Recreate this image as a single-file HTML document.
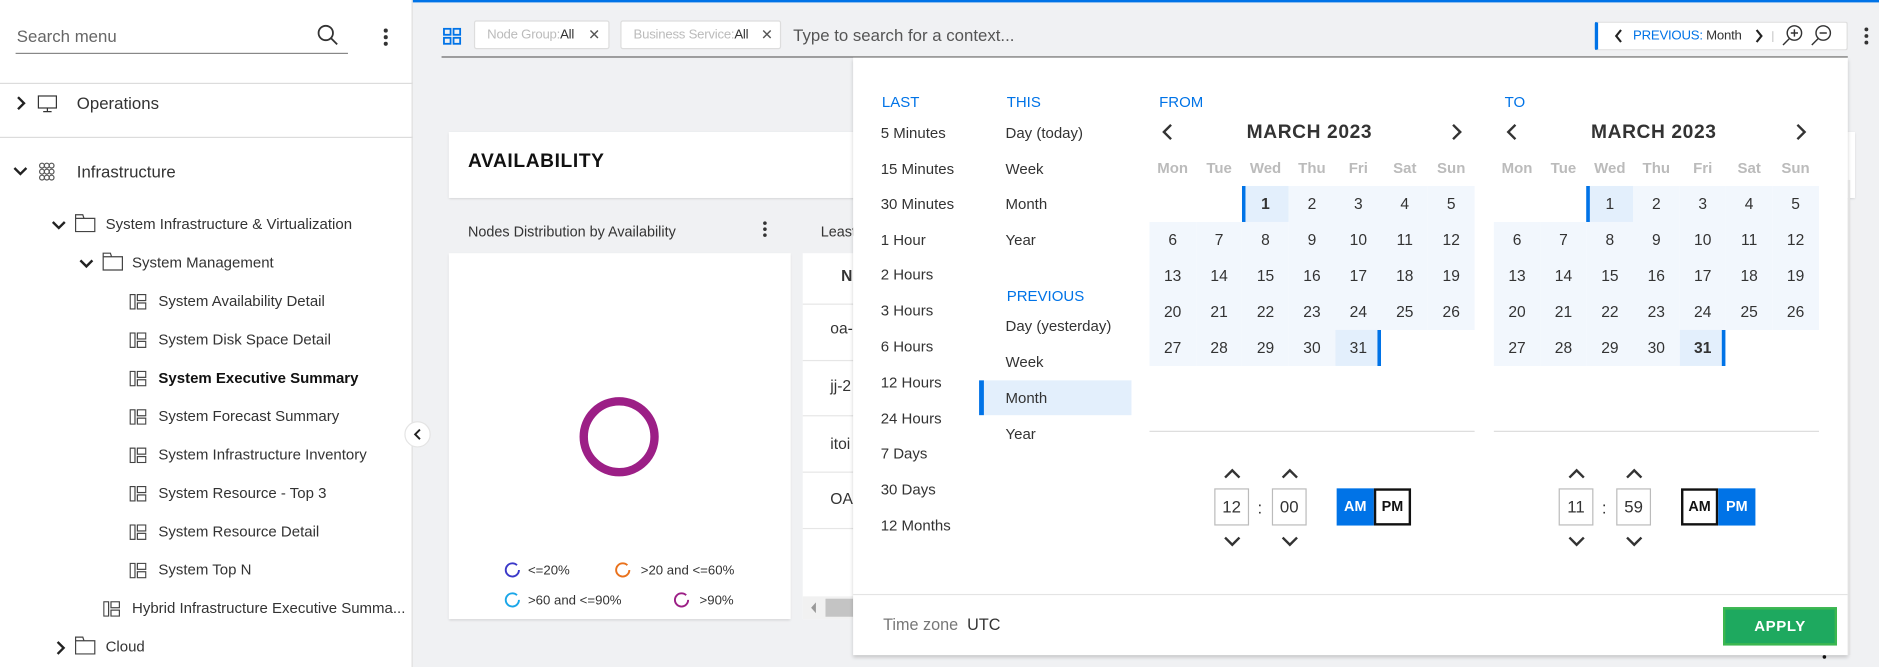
<!DOCTYPE html>
<html><head><meta charset="utf-8">
<style>
*{box-sizing:border-box;margin:0;padding:0}
html,body{width:1879px;height:667px;overflow:hidden;background:#f0f1f3;font-family:"Liberation Sans",sans-serif;color:#333}
#w{position:absolute;left:0;top:0;width:1566px;height:556px;transform:scale(1.19987);transform-origin:0 0;background:#f0f1f3}
.a{position:absolute}
.t{position:absolute;font-size:12.5px;color:#333;white-space:nowrap;line-height:16px}
.side{left:0;top:0;width:344px;height:556px;background:#fff;border-right:1px solid #ddd}
.hr{position:absolute;height:1px;background:#dcdcdc}
.chip{position:absolute;top:17px;height:24px;background:#fff;border:1px solid #ddd;border-radius:2px;font-size:11px;line-height:22px;padding-left:10px;color:#bbb;white-space:nowrap;letter-spacing:-.2px}
.chip b{font-weight:normal;color:#333}
.list .t{font-size:12.5px}
.cal{position:absolute;display:grid;grid-template-columns:repeat(7,38.7px);grid-auto-rows:30px;font-size:13px;color:#333}
.cal div{text-align:center;line-height:30px}
.cal .h{color:#bbb;font-weight:bold;font-size:12.5px}
.cal .r{background:#f2f7fd}
.cal .s{background:#e3effc;box-shadow:inset 3px 0 0 #0073e7}
.cal .e{background:#e3effc;box-shadow:inset -3px 0 0 #0073e7}
.mh{position:absolute;font-weight:bold;font-size:16px;color:#333;letter-spacing:.5px}
.box{position:absolute;width:29px;height:31px;border:1px solid #bbb;font-size:14px;text-align:center;line-height:29px;background:#fff}
.ap{position:absolute;top:407px;height:31px;width:31px;font-size:12px;font-weight:bold;text-align:center;line-height:31px}
.blue{color:#0073e7}
</style></head><body>
<div id="w">
<div class="a" style="left:0;top:0;width:1566px;height:2px;background:#0073e7"></div>
<div class="a" style="left:0;top:0;width:183px;height:2px;background:#1a9be8"></div>

<!-- sidebar -->
<div class="a side">
  <div class="t" style="left:14px;top:22px;font-size:14px;color:#666">Search menu</div>
  <svg class="a" style="left:264px;top:20px" width="18" height="18" viewBox="0 0 18 18"><circle cx="7.5" cy="7.5" r="6" fill="none" stroke="#333" stroke-width="1.5"/><path d="M12 12l5 5" stroke="#333" stroke-width="1.5"/></svg>
  <div class="a" style="left:13px;top:44px;width:277px;height:1px;background:#888"></div>
  <svg class="a" style="left:319px;top:23px" width="5" height="16"><circle cx="2.5" cy="2.5" r="1.7" fill="#333"/><circle cx="2.5" cy="8" r="1.7" fill="#333"/><circle cx="2.5" cy="13.5" r="1.7" fill="#333"/></svg>
  <div class="hr" style="left:0;top:69px;width:344px"></div>
  <svg class="a" style="left:13px;top:80px" width="10" height="12"><path d="M2 1l5 5-5 5" fill="none" stroke="#222" stroke-width="2"/></svg>
  <svg class="a" style="left:31px;top:79px" width="18" height="15"><rect x="1" y="1" width="15" height="10" fill="none" stroke="#333"/><path d="M8.5 11v3M5 14h7" stroke="#333"/></svg>
  <div class="t" style="left:64px;top:78px;font-size:14px">Operations</div>
  <div class="hr" style="left:0;top:114px;width:344px"></div>
  <svg class="a" style="left:11px;top:138px" width="12" height="10"><path d="M1 2l5 5 5-5" fill="none" stroke="#222" stroke-width="2"/></svg>
  <svg class="a" style="left:31px;top:135px" width="16" height="16" fill="none" stroke="#555" stroke-width="1"><circle cx="4" cy="3" r="2"/><circle cx="8" cy="3" r="2"/><circle cx="12" cy="3" r="2"/><circle cx="4" cy="8" r="2"/><circle cx="12" cy="8" r="2"/><circle cx="4" cy="13" r="2"/><circle cx="8" cy="13" r="2"/><circle cx="12" cy="13" r="2"/><circle cx="8" cy="8" r="2"/></svg>
  <div class="t" style="left:64px;top:135px;font-size:14px">Infrastructure</div>

  <svg class="a" style="left:43px;top:183px" width="12" height="10"><path d="M1 2l5 5 5-5" fill="none" stroke="#222" stroke-width="2"/></svg>
  <svg class="a" style="left:62px;top:178px" width="18" height="16"><path d="M1 1h6l1 3h9v11H1z M1 4h7" fill="none" stroke="#444"/></svg>
  <div class="t" style="left:88px;top:179px">System Infrastructure &amp; Virtualization</div>

  <svg class="a" style="left:66px;top:215px" width="12" height="10"><path d="M1 2l5 5 5-5" fill="none" stroke="#222" stroke-width="2"/></svg>
  <svg class="a" style="left:85px;top:210px" width="18" height="16"><path d="M1 1h6l1 3h9v11H1z M1 4h7" fill="none" stroke="#444"/></svg>
  <div class="t" style="left:110px;top:211px">System Management</div>

  <svg class="a" style="left:108px;top:245px" width="14" height="13"><rect x="0.5" y="0.5" width="4" height="12" fill="none" stroke="#444"/><rect x="6.5" y="0.5" width="7" height="5" fill="none" stroke="#444"/><rect x="6.5" y="7.5" width="7" height="5" fill="none" stroke="#444"/></svg>
  <div class="t" style="left:132px;top:243px">System Availability Detail</div>
  <svg class="a" style="left:108px;top:277px" width="14" height="13"><rect x="0.5" y="0.5" width="4" height="12" fill="none" stroke="#444"/><rect x="6.5" y="0.5" width="7" height="5" fill="none" stroke="#444"/><rect x="6.5" y="7.5" width="7" height="5" fill="none" stroke="#444"/></svg>
  <div class="t" style="left:132px;top:275px">System Disk Space Detail</div>
  <svg class="a" style="left:108px;top:309px" width="14" height="13"><rect x="0.5" y="0.5" width="4" height="12" fill="none" stroke="#444"/><rect x="6.5" y="0.5" width="7" height="5" fill="none" stroke="#444"/><rect x="6.5" y="7.5" width="7" height="5" fill="none" stroke="#444"/></svg>
  <div class="t" style="left:132px;top:307px;font-weight:bold;color:#111">System Executive Summary</div>
  <svg class="a" style="left:108px;top:341px" width="14" height="13"><rect x="0.5" y="0.5" width="4" height="12" fill="none" stroke="#444"/><rect x="6.5" y="0.5" width="7" height="5" fill="none" stroke="#444"/><rect x="6.5" y="7.5" width="7" height="5" fill="none" stroke="#444"/></svg>
  <div class="t" style="left:132px;top:339px">System Forecast Summary</div>
  <svg class="a" style="left:108px;top:373px" width="14" height="13"><rect x="0.5" y="0.5" width="4" height="12" fill="none" stroke="#444"/><rect x="6.5" y="0.5" width="7" height="5" fill="none" stroke="#444"/><rect x="6.5" y="7.5" width="7" height="5" fill="none" stroke="#444"/></svg>
  <div class="t" style="left:132px;top:371px">System Infrastructure Inventory</div>
  <svg class="a" style="left:108px;top:405px" width="14" height="13"><rect x="0.5" y="0.5" width="4" height="12" fill="none" stroke="#444"/><rect x="6.5" y="0.5" width="7" height="5" fill="none" stroke="#444"/><rect x="6.5" y="7.5" width="7" height="5" fill="none" stroke="#444"/></svg>
  <div class="t" style="left:132px;top:403px">System Resource - Top 3</div>
  <svg class="a" style="left:108px;top:437px" width="14" height="13"><rect x="0.5" y="0.5" width="4" height="12" fill="none" stroke="#444"/><rect x="6.5" y="0.5" width="7" height="5" fill="none" stroke="#444"/><rect x="6.5" y="7.5" width="7" height="5" fill="none" stroke="#444"/></svg>
  <div class="t" style="left:132px;top:435px">System Resource Detail</div>
  <svg class="a" style="left:108px;top:469px" width="14" height="13"><rect x="0.5" y="0.5" width="4" height="12" fill="none" stroke="#444"/><rect x="6.5" y="0.5" width="7" height="5" fill="none" stroke="#444"/><rect x="6.5" y="7.5" width="7" height="5" fill="none" stroke="#444"/></svg>
  <div class="t" style="left:132px;top:467px">System Top N</div>
  <svg class="a" style="left:86px;top:501px" width="14" height="13"><rect x="0.5" y="0.5" width="4" height="12" fill="none" stroke="#444"/><rect x="6.5" y="0.5" width="7" height="5" fill="none" stroke="#444"/><rect x="6.5" y="7.5" width="7" height="5" fill="none" stroke="#444"/></svg>
  <div class="t" style="left:110px;top:499px">Hybrid Infrastructure Executive Summa...</div>
  <svg class="a" style="left:46px;top:534px" width="10" height="12"><path d="M2 1l5 5-5 5" fill="none" stroke="#222" stroke-width="2"/></svg>
  <svg class="a" style="left:62px;top:530px" width="18" height="16"><path d="M1 1h6l1 3h9v11H1z M1 4h7" fill="none" stroke="#444"/></svg>
  <div class="t" style="left:88px;top:531px">Cloud</div>
</div>
<div class="a" style="left:337px;top:351px;width:22px;height:22px;border-radius:50%;background:#fff;border:1px solid #e4e4e4"></div>
<svg class="a" style="left:343px;top:357px" width="10" height="10"><path d="M7 1L3 5l4 4" fill="none" stroke="#222" stroke-width="1.6"/></svg>

<!-- toolbar -->
<svg class="a" style="left:369px;top:23px" width="16" height="15" fill="none" stroke="#0073e7" stroke-width="1.5"><rect x="1" y="1" width="5.5" height="5"/><rect x="9" y="1" width="5.5" height="5"/><rect x="1" y="8.5" width="5.5" height="5"/><rect x="9" y="8.5" width="5.5" height="5"/></svg>
<div class="chip" style="left:395px;width:113px">Node Group:<b>All</b><span style="position:absolute;right:7px;color:#555;font-size:12px">✕</span></div>
<div class="chip" style="left:517px;width:134px">Business Service:<b>All</b><span style="position:absolute;right:6px;color:#555;font-size:12px">✕</span></div>
<div class="t" style="left:661px;top:21px;font-size:14px;color:#555">Type to search for a context...</div>
<div class="a" style="left:368px;top:47px;width:1172px;height:1px;background:#666"></div>
<div class="a" style="left:1329px;top:18px;width:211px;height:24px;background:#fff;border:1px solid #ddd;border-left:3px solid #0073e7;border-radius:2px"></div>
<svg class="a" style="left:1345px;top:24px" width="8" height="12"><path d="M6 1L2 6l4 5" fill="none" stroke="#222" stroke-width="1.8"/></svg>
<div class="t" style="left:1361px;top:22px;font-size:11px;letter-spacing:-.2px"><span class="blue">PREVIOUS:</span> Month</div>
<svg class="a" style="left:1462px;top:24px" width="8" height="12"><path d="M2 1l4 5-4 5" fill="none" stroke="#222" stroke-width="1.8"/></svg>
<div class="a" style="left:1477px;top:26px;width:1px;height:9px;background:#ccc"></div>
<svg class="a" style="left:1485px;top:20px" width="18" height="18" fill="none" stroke="#333" stroke-width="1.2"><circle cx="10.5" cy="7.5" r="6"/><path d="M6.5 12L1 17.5M10.5 4.5v6M7.5 7.5h6"/></svg>
<svg class="a" style="left:1509px;top:20px" width="18" height="18" fill="none" stroke="#333" stroke-width="1.2"><circle cx="10.5" cy="7.5" r="6"/><path d="M6.5 12L1 17.5M7.5 7.5h6"/></svg>
<svg class="a" style="left:1553px;top:22px" width="5" height="16"><circle cx="2.5" cy="2.5" r="1.6" fill="#333"/><circle cx="2.5" cy="8" r="1.6" fill="#333"/><circle cx="2.5" cy="13.5" r="1.6" fill="#333"/></svg>

<!-- availability card -->
<div class="a" style="left:374px;top:110px;width:1172px;height:55px;background:#fff;box-shadow:0 1px 2px rgba(0,0,0,.15)"></div>
<div class="t" style="left:390px;top:127px;font-size:16px;font-weight:bold;color:#111;letter-spacing:.5px">AVAILABILITY</div>
<div class="t" style="left:390px;top:185px;font-size:12px">Nodes Distribution by Availability</div>
<svg class="a" style="left:635px;top:184px" width="5" height="15"><circle cx="2.5" cy="2" r="1.5" fill="#333"/><circle cx="2.5" cy="7" r="1.5" fill="#333"/><circle cx="2.5" cy="12" r="1.5" fill="#333"/></svg>
<div class="t" style="left:684px;top:185px;font-size:12px">Least</div>
<div class="a" style="left:374px;top:211px;width:285px;height:305px;background:#fff;box-shadow:0 1px 2px rgba(0,0,0,.15)"></div>
<svg class="a" style="left:482px;top:330px" width="68" height="68"><circle cx="34" cy="34" r="29.5" fill="none" stroke="#9c1f86" stroke-width="7"/></svg>
<svg class="a" style="left:420px;top:468px" width="14" height="14" fill="none" stroke-width="1.6"><circle cx="7" cy="7" r="5.5" stroke="#3b39c8" stroke-dasharray="30 5"/></svg>
<div class="t" style="left:440px;top:468px;font-size:11px">&lt;=20%</div>
<svg class="a" style="left:512px;top:468px" width="14" height="14" fill="none" stroke-width="1.6"><circle cx="7" cy="7" r="5.5" stroke="#e9711c" stroke-dasharray="30 5"/></svg>
<div class="t" style="left:534px;top:468px;font-size:11px">&gt;20 and &lt;=60%</div>
<svg class="a" style="left:420px;top:493px" width="14" height="14" fill="none" stroke-width="1.6"><circle cx="7" cy="7" r="5.5" stroke="#1aa6e8" stroke-dasharray="30 5"/></svg>
<div class="t" style="left:440px;top:493px;font-size:11px">&gt;60 and &lt;=90%</div>
<svg class="a" style="left:561px;top:493px" width="14" height="14" fill="none" stroke-width="1.6"><circle cx="7" cy="7" r="5.5" stroke="#9c1f86" stroke-dasharray="30 5"/></svg>
<div class="t" style="left:583px;top:493px;font-size:11px">&gt;90%</div>

<div class="a" style="left:669px;top:211px;width:50px;height:305px;background:#fff"></div>
<div class="t" style="left:701px;top:222px;font-size:13px;font-weight:bold">N</div>
<div class="hr" style="left:669px;top:253px;width:50px;background:#e6e6e6"></div>
<div class="t" style="left:692px;top:266px;font-size:13px">oa-</div>
<div class="hr" style="left:669px;top:300px;width:50px;background:#e6e6e6"></div>
<div class="t" style="left:692px;top:314px;font-size:13px">jj-2</div>
<div class="hr" style="left:669px;top:346px;width:50px;background:#e6e6e6"></div>
<div class="t" style="left:692px;top:362px;font-size:13px">itoi</div>
<div class="hr" style="left:669px;top:393px;width:50px;background:#e6e6e6"></div>
<div class="t" style="left:692px;top:408px;font-size:13px">OA</div>
<div class="hr" style="left:669px;top:440px;width:50px;background:#e6e6e6"></div>
<div class="a" style="left:669px;top:497px;width:50px;height:19px;background:#f1f1f1"></div>
<div class="a" style="left:688px;top:499px;width:23px;height:15px;background:#c4c4c4"></div>
<svg class="a" style="left:675px;top:502px" width="6" height="9"><path d="M5 0L1 4.5 5 9z" fill="#999"/></svg>

<!-- popup -->
<div class="a" style="left:711px;top:48px;width:829px;height:498px;background:#fff;box-shadow:0 2px 3px rgba(0,0,0,.18)"></div>
<div class="a" style="left:1540px;top:150px;width:2px;height:396px;background:#e2e2e2"></div>
<div class="list">
<div class="t blue" style="left:735px;top:77px">LAST</div>
<div class="t" style="left:734px;top:103px">5 Minutes</div>
<div class="t" style="left:734px;top:133px">15 Minutes</div>
<div class="t" style="left:734px;top:162px">30 Minutes</div>
<div class="t" style="left:734px;top:192px">1 Hour</div>
<div class="t" style="left:734px;top:221px">2 Hours</div>
<div class="t" style="left:734px;top:251px">3 Hours</div>
<div class="t" style="left:734px;top:281px">6 Hours</div>
<div class="t" style="left:734px;top:311px">12 Hours</div>
<div class="t" style="left:734px;top:341px">24 Hours</div>
<div class="t" style="left:734px;top:370px">7 Days</div>
<div class="t" style="left:734px;top:400px">30 Days</div>
<div class="t" style="left:734px;top:430px">12 Months</div>
<div class="t blue" style="left:839px;top:77px">THIS</div>
<div class="t" style="left:838px;top:103px">Day (today)</div>
<div class="t" style="left:838px;top:133px">Week</div>
<div class="t" style="left:838px;top:162px">Month</div>
<div class="t" style="left:838px;top:192px">Year</div>
<div class="t blue" style="left:839px;top:239px">PREVIOUS</div>
<div class="t" style="left:838px;top:264px">Day (yesterday)</div>
<div class="t" style="left:838px;top:294px">Week</div>
<div class="a" style="left:816px;top:317px;width:127px;height:29px;background:#e3effc;border-left:4px solid #0073e7"></div>
<div class="t" style="left:838px;top:324px">Month</div>
<div class="t" style="left:838px;top:354px">Year</div>
</div>

<div class="t blue" style="left:966px;top:77px">FROM</div>
<svg class="a" style="left:968px;top:103px" width="10" height="14"><path d="M8 1L2 7l6 6" fill="none" stroke="#333" stroke-width="2"/></svg>
<div class="mh" style="left:1039px;top:102px">MARCH 2023</div>
<svg class="a" style="left:1209px;top:103px" width="10" height="14"><path d="M2 1l6 6-6 6" fill="none" stroke="#333" stroke-width="2"/></svg>
<div class="cal" style="left:958px;top:125px">
<div class="h">Mon</div><div class="h">Tue</div><div class="h">Wed</div><div class="h">Thu</div><div class="h">Fri</div><div class="h">Sat</div><div class="h">Sun</div>
<div></div><div></div><div class="s" style="font-weight:bold">1</div><div class="r">2</div><div class="r">3</div><div class="r">4</div><div class="r">5</div>
<div class="r">6</div><div class="r">7</div><div class="r">8</div><div class="r">9</div><div class="r">10</div><div class="r">11</div><div class="r">12</div>
<div class="r">13</div><div class="r">14</div><div class="r">15</div><div class="r">16</div><div class="r">17</div><div class="r">18</div><div class="r">19</div>
<div class="r">20</div><div class="r">21</div><div class="r">22</div><div class="r">23</div><div class="r">24</div><div class="r">25</div><div class="r">26</div>
<div class="r">27</div><div class="r">28</div><div class="r">29</div><div class="r">30</div><div class="e">31</div><div></div><div></div>
</div>

<div class="t blue" style="left:1254px;top:77px">TO</div>
<svg class="a" style="left:1255px;top:103px" width="10" height="14"><path d="M8 1L2 7l6 6" fill="none" stroke="#333" stroke-width="2"/></svg>
<div class="mh" style="left:1326px;top:102px">MARCH 2023</div>
<svg class="a" style="left:1496px;top:103px" width="10" height="14"><path d="M2 1l6 6-6 6" fill="none" stroke="#333" stroke-width="2"/></svg>
<div class="cal" style="left:1245px;top:125px">
<div class="h">Mon</div><div class="h">Tue</div><div class="h">Wed</div><div class="h">Thu</div><div class="h">Fri</div><div class="h">Sat</div><div class="h">Sun</div>
<div></div><div></div><div class="s">1</div><div class="r">2</div><div class="r">3</div><div class="r">4</div><div class="r">5</div>
<div class="r">6</div><div class="r">7</div><div class="r">8</div><div class="r">9</div><div class="r">10</div><div class="r">11</div><div class="r">12</div>
<div class="r">13</div><div class="r">14</div><div class="r">15</div><div class="r">16</div><div class="r">17</div><div class="r">18</div><div class="r">19</div>
<div class="r">20</div><div class="r">21</div><div class="r">22</div><div class="r">23</div><div class="r">24</div><div class="r">25</div><div class="r">26</div>
<div class="r">27</div><div class="r">28</div><div class="r">29</div><div class="r">30</div><div class="e" style="font-weight:bold">31</div><div></div><div></div>
</div>

<div class="hr" style="left:958px;top:359px;width:271px"></div>
<div class="hr" style="left:1245px;top:359px;width:271px"></div>

<!-- time from -->
<svg class="a" style="left:1019px;top:390px" width="16" height="10"><path d="M2 8l6-6 6 6" fill="none" stroke="#333" stroke-width="2"/></svg>
<svg class="a" style="left:1067px;top:390px" width="16" height="10"><path d="M2 8l6-6 6 6" fill="none" stroke="#333" stroke-width="2"/></svg>
<div class="box" style="left:1012px;top:407px">12</div>
<div class="t" style="left:1048px;top:415px;font-size:14px">:</div>
<div class="box" style="left:1060px;top:407px">00</div>
<svg class="a" style="left:1019px;top:446px" width="16" height="10"><path d="M2 2l6 6 6-6" fill="none" stroke="#333" stroke-width="2"/></svg>
<svg class="a" style="left:1067px;top:446px" width="16" height="10"><path d="M2 2l6 6 6-6" fill="none" stroke="#333" stroke-width="2"/></svg>
<div class="ap" style="left:1114px;background:#0073e7;color:#fff">AM</div>
<div class="ap" style="left:1145px;border:2px solid #111;color:#111;line-height:27px">PM</div>

<!-- time to -->
<svg class="a" style="left:1306px;top:390px" width="16" height="10"><path d="M2 8l6-6 6 6" fill="none" stroke="#333" stroke-width="2"/></svg>
<svg class="a" style="left:1354px;top:390px" width="16" height="10"><path d="M2 8l6-6 6 6" fill="none" stroke="#333" stroke-width="2"/></svg>
<div class="box" style="left:1299px;top:407px">11</div>
<div class="t" style="left:1335px;top:415px;font-size:14px">:</div>
<div class="box" style="left:1347px;top:407px">59</div>
<svg class="a" style="left:1306px;top:446px" width="16" height="10"><path d="M2 2l6 6 6-6" fill="none" stroke="#333" stroke-width="2"/></svg>
<svg class="a" style="left:1354px;top:446px" width="16" height="10"><path d="M2 2l6 6 6-6" fill="none" stroke="#333" stroke-width="2"/></svg>
<div class="ap" style="left:1401px;border:2px solid #111;color:#111;line-height:27px">AM</div>
<div class="ap" style="left:1432px;background:#0073e7;color:#fff">PM</div>

<div class="hr" style="left:711px;top:495px;width:829px;background:#e4e4e4"></div>
<div class="t" style="left:736px;top:513px;font-size:13.5px;color:#777">Time zone <span style="color:#333">&nbsp;UTC</span></div>
<div class="a" style="left:1436px;top:506px;width:95px;height:32px;background:#1ea95f;border:2px solid #3cb750;color:#fff;font-weight:bold;font-size:12.5px;text-align:center;line-height:28px;letter-spacing:.5px">APPLY</div>
<div class="a" style="left:1519px;top:546px;width:3px;height:3px;border-radius:50%;background:#111"></div>
</div>
</body></html>
